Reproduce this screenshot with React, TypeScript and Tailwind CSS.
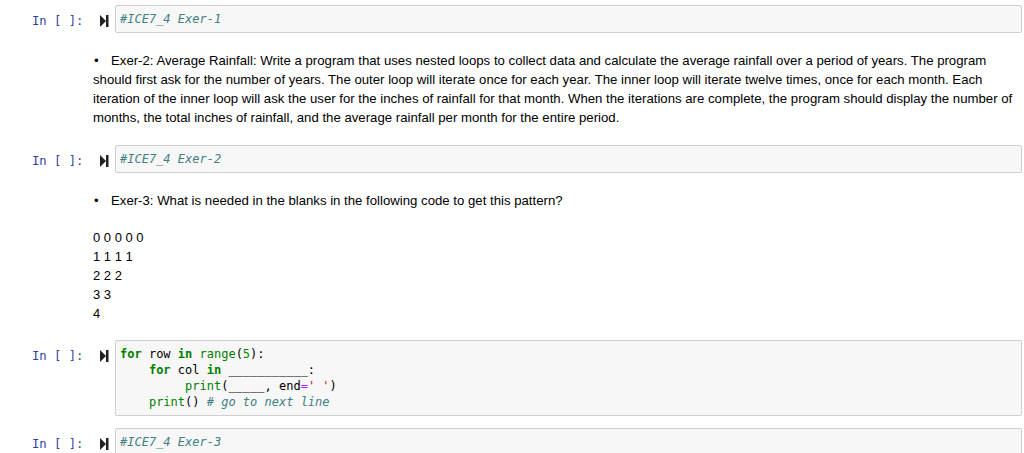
import React from 'react';

const RunIcon: React.FC = () => (
  <svg width="9" height="12" viewBox="0 0 9 12" className="block">
    <path d="M0 0 L6 6 L0 12 Z" fill="#222" />
    <rect x="6" y="0" width="2.5" height="12" fill="#222" />
  </svg>
);

const CodeCell: React.FC<{ children: React.ReactNode; className?: string }> = ({ children, className = '' }) => (
  <div className={`flex items-start ${className}`}>
    <div className="flex items-center w-[115px] pl-[32px] pt-[4px] h-[28px]">
      <span className="text-[12.2px] leading-[16px] text-[#303F9F] w-[68px] whitespace-pre font-['DejaVu_Sans_Mono',monospace]">In [ ]:</span>
      <RunIcon />
    </div>
    <div className="flex-1 mr-[2px] bg-[#f7f7f7] border border-[#cfcfcf] rounded-[2px] px-[4px] py-[5px] text-[12px] leading-[16px] text-black whitespace-pre font-['DejaVu_Sans_Mono',monospace]">
      {children}
    </div>
  </div>
);

const Comment: React.FC<{ children: React.ReactNode }> = ({ children }) => (
  <span className="italic text-[#408080]">{children}</span>
);
const Kw: React.FC<{ children: React.ReactNode }> = ({ children }) => (
  <span className="font-bold text-[#008000]">{children}</span>
);
const Bi: React.FC<{ children: React.ReactNode }> = ({ children }) => (
  <span className="text-[#008000]">{children}</span>
);

const Bullet: React.FC<{ children: React.ReactNode }> = ({ children }) => (
  <p>
    <span className="inline-block w-[18px] pl-[1px]">•</span>
    {children}
  </p>
);

export default function App() {
  return (
    <div className="w-[1024px] h-[453px] overflow-hidden bg-white pt-[5px] font-['Liberation_Sans',Arial,sans-serif] text-[13px] text-black">
      <CodeCell>
        <Comment>#ICE7_4 Exer-1</Comment>
      </CodeCell>

      <div className="pl-[93px] pr-[4px] mt-[18px] leading-[19px] text-[13.2px]">
        <Bullet>
          Exer-2: Average Rainfall: Write a program that uses nested loops to collect data and calculate the average rainfall over a period of years. The program should first ask for the number of years. The outer loop will iterate once for each year. The inner loop will iterate twelve times, once for each month. Each iteration of the inner loop will ask the user for the inches of rainfall for that month. When the iterations are complete, the program should display the number of months, the total inches of rainfall, and the average rainfall per month for the entire period.
        </Bullet>
      </div>

      <CodeCell className="mt-[18px]">
        <Comment>#ICE7_4 Exer-2</Comment>
      </CodeCell>

      <div className="pl-[93px] pr-[4px] mt-[18px] leading-[19px] text-[13.2px]">
        <Bullet>Exer-3: What is needed in the blanks in the following code to get this pattern?</Bullet>
        <div className="mt-[18px] text-[13px]">
          <p>0 0 0 0 0</p>
          <p>1 1 1 1</p>
          <p>2 2 2</p>
          <p>3 3</p>
          <p>4</p>
        </div>
      </div>

      <CodeCell className="mt-[17px]">
        <div>
          <Kw>for</Kw> row <Kw>in</Kw> <Bi>range</Bi>(<span className="text-[#008800]">5</span>):
        </div>
        <div>
          {'    '}<Kw>for</Kw> col <Kw>in</Kw> ___________:
        </div>
        <div>
          {'         '}<Bi>print</Bi>(_____, end<span className="text-[#AA22FF]">=</span><span className="text-[#BA2121]">' '</span>)
        </div>
        <div>
          {'    '}<Bi>print</Bi>() <Comment># go to next line</Comment>
        </div>
      </CodeCell>

      <CodeCell className="mt-[12px]">
        <Comment>#ICE7_4 Exer-3</Comment>
      </CodeCell>
    </div>
  );
}
